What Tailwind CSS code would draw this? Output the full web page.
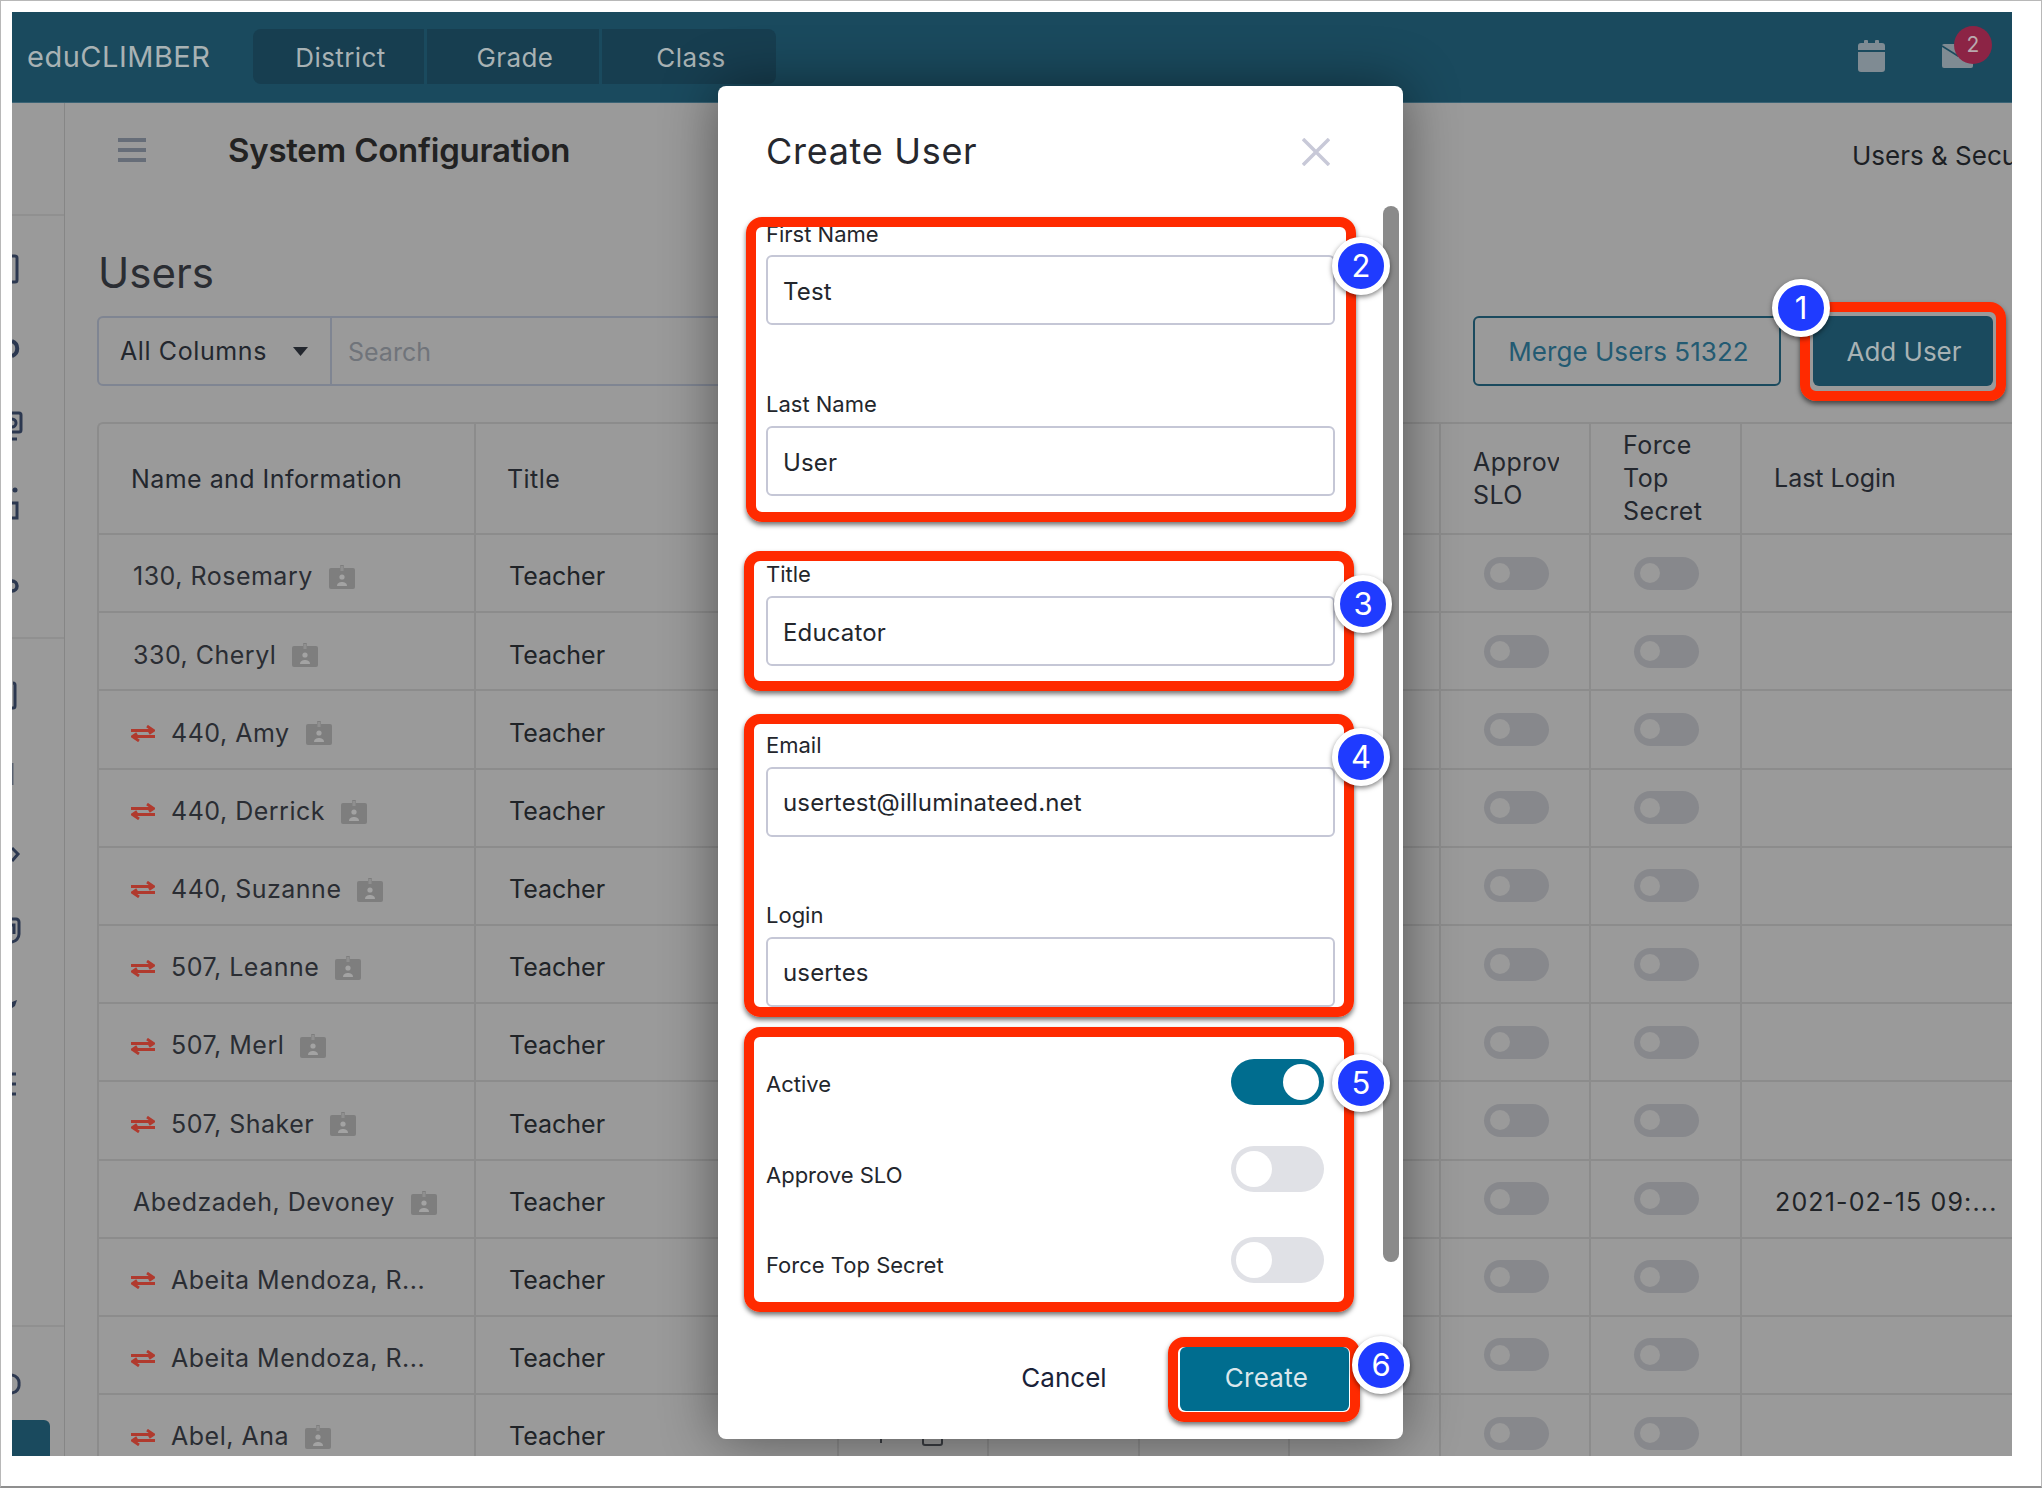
<!DOCTYPE html>
<html lang="en">
<head>
  <meta charset="UTF-8" />
  <title>Create User</title>
  <script src="https://cdn.jsdelivr.net/npm/@tailwindcss/browser@4"></script>
</head>
<body class="bg-white font-['Inter',sans-serif]">
<div class="relative w-[2042px] h-[1488px] border border-[#b8b8b8] border-b-2 border-b-[#8f8f8f] overflow-hidden bg-white pl-[11px] pt-[11px]">

  <!-- app, dimmed by the modal backdrop -->
  <div class="relative w-[2000px] h-[1444px] overflow-hidden bg-[#9a9a9a]">
    <!-- top nav -->
    <div class="h-[91px] bg-[#1a4a5e] flex items-center border-b border-[#3a6375] text-[#a8b2b4]">
      <span class="ml-[15px] w-[226px] text-[29px] tracking-[0.5px]">eduCLIMBER</span>
      <div class="flex gap-[3px] -mt-[2px] text-[26px] tracking-[0.4px]">
        <div class="w-[171px] h-[55px] bg-[#173e50] rounded-l-lg flex items-center justify-center pl-[4px] pt-[2px]">District</div>
        <div class="w-[172px] h-[55px] bg-[#173e50] flex items-center justify-center pl-[4px] pt-[2px]">Grade</div>
        <div class="w-[174px] h-[55px] bg-[#173e50] rounded-r-lg flex items-center justify-center pl-[4px] pt-[2px]">Class</div>
      </div>
      <svg class="ml-[1082px] -mt-[2px] w-[27px] h-[32px]" viewBox="0 0 27 32" fill="#7f8b93"><path d="M3 3h21a3 3 0 0 1 3 3v4H0V6a3 3 0 0 1 3-3z"/><path d="M0 12h27v17a3 3 0 0 1-3 3H3a3 3 0 0 1-3-3z"/><rect x="6" y="0" width="4" height="6" rx="1"/><rect x="17" y="0" width="4" height="6" rx="1"/></svg>
      <div class="relative ml-[57px] w-[31px] h-[24px] -mt-[2px]">
        <svg class="w-[31px] h-[24px]" viewBox="0 0 31 24" fill="#7f8b93"><rect width="31" height="24" rx="2"/><path d="M0 2l16 10 15-9" fill="none" stroke="#1a4a5e" stroke-width="1.5"/></svg>
        <span class="absolute -top-[18px] left-[12px] w-[38px] h-[38px] rounded-full bg-[#8c2445] flex items-center justify-center text-[21px] text-[#b9a9ae]">2</span>
      </div>
    </div>

    <div class="flex h-[1353px]">
      <!-- sidebar, scrolled off to the left -->
      <div class="relative w-[53px] shrink-0 border-r border-[#868686]">
        <svg class="w-[52px] h-[1353px]" viewBox="0 0 52 1353" fill="none" stroke="#2c3850" stroke-width="3">
          <line x1="0" y1="112" x2="52" y2="112" stroke="#868686" stroke-width="1"/>
          <line x1="0" y1="535" x2="52" y2="535" stroke="#868686" stroke-width="1"/>
          <line x1="0" y1="1223" x2="52" y2="1223" stroke="#868686" stroke-width="1"/>
          <path d="M0 153h3a2 2 0 0 1 2 2v22a2 2 0 0 1-2 2H0"/>
          <path d="M0 238a8 8 0 0 1 0 15" stroke-width="4"/>
          <path d="M0 310h7a2 2 0 0 1 2 2v15a2 2 0 0 1-2 2H0M0 316a4 4 0 0 1 0 8M0 336h5"/>
          <circle cx="3" cy="387" r="2.5" fill="#2c3850" stroke="none"/>
          <path d="M0 400h5v15H0"/>
          <path d="M0 478a5 5 0 0 1 0 10" stroke-width="3.5"/>
          <path d="M1 580a2 2 0 0 1 2 2v21a2 2 0 0 1-2 2H0"/>
          <path d="M0 660v22" stroke="#5a6270"/>
          <path d="M0 745l6 6-6 7"/>
          <path d="M0 816h4a3 3 0 0 1 3 3v12a8 8 0 0 1-7 8M0 822h2v9"/>
          <path d="M0 899l5-2-2 6-3 2z" fill="#2c3850" stroke="none"/>
          <path d="M0 971h4M0 981h4M0 991h4"/>
          <path d="M0 1272a8 8 0 0 1 7 9 8 8 0 0 1-7 9"/>
        </svg>
        <div class="absolute left-0 bottom-0 w-[38px] h-[36px] bg-[#1a4a5e] rounded-tr-md"></div>
      </div>

      <!-- main -->
      <div class="pl-[32px] flex-1 min-w-0">
        <div class="h-[94px] flex items-center -ml-[32px]">
          <div class="ml-[53px] w-[28px] shrink-0 flex flex-col gap-[6px]">
            <span class="h-[4px] bg-[#666d78]"></span><span class="h-[4px] bg-[#666d78]"></span><span class="h-[4px] bg-[#666d78]"></span>
          </div>
          <span class="ml-[82px] w-[1624px] shrink-0 pt-[2px] text-[33px] font-semibold text-[#222] tracking-[-0.25px]">System Configuration</span>
          <span class="shrink-0 mt-[10px] text-[26px] text-[#1c1f24] whitespace-nowrap">Users &amp; Security</span>
        </div>
        <h2 class="mt-[50px] mb-[17px] ml-[1px] text-[42px] leading-[52px] text-[#2a2d33]">Users</h2>
        <div class="flex h-[70px]">
          <div class="w-[1376px] shrink-0">
            <div class="w-[1000px] h-[70px] flex border-2 border-[#7f8592] rounded-md text-[25px]">
              <div class="w-[233px] flex items-center pl-[21px] border-r-2 border-[#7f8592] text-[#23272e] tracking-[0.6px]">
                <span class="pt-[2px]">All Columns</span>
                <svg class="ml-[26px] w-[15px] h-[9px]" viewBox="0 0 15 9" fill="#23272e"><path d="M0 0h15L7.5 9z"/></svg>
              </div>
              <div class="flex items-center pl-[16px] pt-[4px] text-[#70747a]">Search</div>
            </div>
          </div>
          <button class="w-[308px] shrink-0 border-2 border-[#1a4a5e] rounded-md text-[26px] text-[#235a72] tracking-[0.05px] pl-[3px]">Merge Users 51322</button>
          <button class="ml-[32px] w-[180px] shrink-0 bg-[#1a4a5e] rounded-md text-[26px] text-[#a8b2b4] pl-[2px]">Add User</button>
        </div>

        <!-- table -->
        <div class="mt-[36px] w-[2000px] border-t-2 border-l-2 border-[#8c8c8c] rounded-tl-md">
          <div class="flex h-[111px] border-b-2 border-[#8c8c8c] text-[25px] text-[#23272e] tracking-[0.45px]">
            <div class="w-[377px] shrink-0 pl-[32px] pt-[2px] flex items-center border-r-2 border-[#8c8c8c]">Name and Information</div>
            <div class="w-[363px] shrink-0 pl-[31px] pt-[2px] flex items-center border-r-2 border-[#8c8c8c]">Title</div>
            <div class="w-[150px] shrink-0 border-r-2 border-[#8c8c8c]"></div>
            <div class="w-[151px] shrink-0 border-r-2 border-[#8c8c8c]"></div>
            <div class="w-[150px] shrink-0 border-r-2 border-[#8c8c8c]"></div>
            <div class="w-[151px] shrink-0 pl-[32px] flex items-center border-r-2 border-[#8c8c8c]">Status</div>
            <div class="w-[150px] shrink-0 pl-[32px] flex items-center border-r-2 border-[#8c8c8c] leading-[33px]"><div class="w-[86px] overflow-hidden">Approve<br>SLO</div></div>
            <div class="w-[151px] shrink-0 pl-[32px] flex items-center border-r-2 border-[#8c8c8c] leading-[33px]"><div>Force<br>Top<br>Secret</div></div>
            <div class="w-[300px] shrink-0 pl-[32px] pt-[1px] flex items-center tracking-[0px]">Last Login</div>
          </div>
          <div id="rows"></div>
        </div>
      </div>
    </div>

    <!-- modal -->
    <div class="absolute left-[706px] top-[74px] w-[685px] h-[1353px] bg-white rounded-lg shadow-[0_0_55px_rgba(0,0,0,0.45)] flex flex-col">
      <div class="h-[120px] pl-[48px] flex items-center relative shrink-0">
        <span class="text-[36px] text-[#26282e] tracking-[0.7px] mt-[10px]">Create User</span>
        <svg class="absolute left-[584px] top-[52px] w-[28px] h-[28px]" viewBox="0 0 28 28" stroke="#c8c9d8" stroke-width="3.5"><path d="M1 1l26 26M27 1L1 27"/></svg>
      </div>
      <div class="relative flex-1 pl-[48px] pr-[68px] text-[#23262c]">
        <div class="absolute left-[665px] top-0 w-[16px] h-[1056px] bg-[#8a8a8a] rounded-full"></div>
        <div class="h-[49px] flex items-end pb-[4px] text-[22px]">First Name</div>
        <div class="h-[70px] border-2 border-[#c5c7d6] rounded-md flex items-center pl-[15px] pt-[3px] text-[24px] tracking-[0.15px]">Test</div>
        <div class="h-[101px] flex items-end pb-[5px] text-[22px]">Last Name</div>
        <div class="h-[70px] border-2 border-[#c5c7d6] rounded-md flex items-center pl-[15px] pt-[3px] text-[24px] tracking-[0.15px]">User</div>
        <div class="h-[100px] flex items-end pb-[5px] text-[22px]">Title</div>
        <div class="h-[70px] border-2 border-[#c5c7d6] rounded-md flex items-center pl-[15px] pt-[3px] text-[24px] tracking-[0.15px]">Educator</div>
        <div class="h-[101px] flex items-end pb-[5px] text-[22px]">Email</div>
        <div class="h-[70px] border-2 border-[#c5c7d6] rounded-md flex items-center pl-[15px] pt-[1px] text-[24px] tracking-[0.15px]">usertest@illuminateed.net</div>
        <div class="h-[100px] flex items-end pb-[5px] text-[22px]">Login</div>
        <div class="h-[70px] border-2 border-[#c5c7d6] rounded-md flex items-center pl-[15px] pt-[1px] text-[24px] tracking-[0.15px]">usertes</div>

        <div class="mt-[52px] h-[46px] pr-[11px] flex items-center justify-between text-[22px]">
          <span class="mt-[5px]">Active</span>
          <span class="w-[93px] h-[46px] rounded-full bg-[#006d8f] flex items-center justify-end pr-[5px]"><span class="w-[36px] h-[36px] rounded-full bg-white"></span></span>
        </div>
        <div class="mt-[41px] h-[46px] pr-[11px] flex items-center justify-between text-[22px]">
          <span class="mt-[12px]">Approve SLO</span>
          <span class="w-[93px] h-[46px] rounded-full bg-[#e0e1e6] flex items-center pl-[5px]"><span class="w-[36px] h-[36px] rounded-full bg-white"></span></span>
        </div>
        <div class="mt-[45px] h-[46px] pr-[11px] flex items-center justify-between text-[22px]">
          <span class="mt-[10px]">Force Top Secret</span>
          <span class="w-[93px] h-[46px] rounded-full bg-[#e0e1e6] flex items-center pl-[5px]"><span class="w-[36px] h-[36px] rounded-full bg-white"></span></span>
        </div>
      </div>
      <div class="h-[92px] shrink-0 flex items-start">
        <span class="ml-[266px] mr-[36px] w-[160px] h-[60px] flex items-center justify-center text-[26px] text-[#1a2238]">Cancel</span>
        <button class="w-[169px] h-[64px] bg-[#006d8f] rounded-md text-[26px] text-[#dbe7ec] tracking-[0.3px] pl-[4px] pb-[4px]">Create</button>
      </div>
    </div>
  </div>

  <!-- screenshot annotations -->
  <div class="absolute left-[1799px] top-[301px] w-[206px] h-[99px] border-[10px] border-[#ff2a00] rounded-[16px] shadow-[0_3px_5px_rgba(0,0,0,0.55)]"></div>
  <div class="absolute left-[745px] top-[216px] w-[610px] h-[305px] border-[10px] border-[#ff2a00] rounded-[16px] shadow-[0_3px_5px_rgba(0,0,0,0.55)]"></div>
  <div class="absolute left-[743px] top-[550px] w-[610px] h-[140px] border-[10px] border-[#ff2a00] rounded-[16px] shadow-[0_3px_5px_rgba(0,0,0,0.55)]"></div>
  <div class="absolute left-[743px] top-[713px] w-[610px] h-[303px] border-[10px] border-[#ff2a00] rounded-[16px] shadow-[0_3px_5px_rgba(0,0,0,0.55)]"></div>
  <div class="absolute left-[743px] top-[1026px] w-[610px] h-[285px] border-[10px] border-[#ff2a00] rounded-[16px] shadow-[0_3px_5px_rgba(0,0,0,0.55)]"></div>
  <div class="absolute left-[1167px] top-[1336px] w-[192px] h-[85px] border-[10px] border-[#ff2a00] rounded-[16px] shadow-[0_3px_5px_rgba(0,0,0,0.55)]"></div>

  <div class="absolute left-[1771px] top-[278px] w-[58px] h-[58px] rounded-full bg-[#1f3bff] border-[6px] border-white shadow-[0_2px_5px_rgba(0,0,0,0.5)] flex items-center justify-center text-white text-[31px]">1</div>
  <div class="absolute left-[1331px] top-[236px] w-[58px] h-[58px] rounded-full bg-[#1f3bff] border-[6px] border-white shadow-[0_2px_5px_rgba(0,0,0,0.5)] flex items-center justify-center text-white text-[31px]">2</div>
  <div class="absolute left-[1333px] top-[574px] w-[58px] h-[58px] rounded-full bg-[#1f3bff] border-[6px] border-white shadow-[0_2px_5px_rgba(0,0,0,0.5)] flex items-center justify-center text-white text-[31px]">3</div>
  <div class="absolute left-[1331px] top-[727px] w-[58px] h-[58px] rounded-full bg-[#1f3bff] border-[6px] border-white shadow-[0_2px_5px_rgba(0,0,0,0.5)] flex items-center justify-center text-white text-[31px]">4</div>
  <div class="absolute left-[1331px] top-[1053px] w-[58px] h-[58px] rounded-full bg-[#1f3bff] border-[6px] border-white shadow-[0_2px_5px_rgba(0,0,0,0.5)] flex items-center justify-center text-white text-[31px]">5</div>
  <div class="absolute left-[1351px] top-[1335px] w-[58px] h-[58px] rounded-full bg-[#1f3bff] border-[6px] border-white shadow-[0_2px_5px_rgba(0,0,0,0.5)] flex items-center justify-center text-white text-[31px]">6</div>
</div>

<script>
  // [name, has merge arrows, last login]
  const users = [
    ["130, Rosemary", false, ""],
    ["330, Cheryl", false, ""],
    ["440, Amy", true, ""],
    ["440, Derrick", true, ""],
    ["440, Suzanne", true, ""],
    ["507, Leanne", true, ""],
    ["507, Merl", true, ""],
    ["507, Shaker", true, ""],
    ["Abedzadeh, Devoney", false, "2021-02-15 09:..."],
    ["Abeita Mendoza, R...", true, ""],
    ["Abeita Mendoza, R...", true, ""],
    ["Abel, Ana", true, ""],
  ];

  const arrows = `<svg class="w-[24px] h-[17px] shrink-0 mr-[16px]" viewBox="0 0 24 17" fill="none" stroke="#b03a2e" stroke-width="2.8"><path d="M0 5.5h22M16 1l6.5 4.5L18 8.5M24 11.5H2M8 16l-6.5-4.5L6 8.5"/></svg>`;
  const badge = `<svg class="ml-[16px] w-[26px] h-[24px] shrink-0" viewBox="0 0 26 24"><path d="M2 3h9V1a1 1 0 0 1 1-1h2a1 1 0 0 1 1 1v2h9a2 2 0 0 1 2 2v17a2 2 0 0 1-2 2H2a2 2 0 0 1-2-2V5a2 2 0 0 1 2-2z" fill="#7e7e7e"/><rect x="11.5" y="1" width="3" height="5" fill="#8f8f8f"/><circle cx="13" cy="12" r="2.6" fill="#a3a3a3"/><path d="M8 21c0-3 2.5-4 5-4s5 1 5 4z" fill="#a3a3a3"/></svg>`;
  const toggle = `<span class="ml-[2px] w-[65px] h-[33px] rounded-full bg-[#87888c] flex items-center pl-[6px]"><span class="w-[20px] h-[20px] rounded-full bg-[#9a9a9a]"></span></span>`;
  // action icons of the column under the modal; only their bottoms show below it
  const actions = `<svg class="w-[148px] h-[78px]" viewBox="0 0 148 78" fill="none" stroke="#3a3d42" stroke-width="2"><path d="M42 30v18"/><rect x="84" y="30" width="19" height="20" rx="2"/></svg>`;

  document.getElementById("rows").innerHTML = users.map(([name, merged, login], i) => `
    <div class="flex h-[78.2px] border-b-2 border-[#8c8c8c] text-[25px] text-[#2a2d33]">
      <div class="w-[377px] shrink-0 ${merged ? "pl-[32px]" : "pl-[34px]"} pt-[8px] flex items-center border-r-2 border-[#8c8c8c] tracking-[0.5px]">${merged ? arrows : ""}<span class="whitespace-nowrap">${name}</span>${name.endsWith("...") ? "" : badge}</div>
      <div class="w-[363px] shrink-0 pl-[33px] pt-[8px] flex items-center border-r-2 border-[#8c8c8c] text-[#202327]">Teacher</div>
      <div class="w-[150px] shrink-0 border-r-2 border-[#8c8c8c]">${i === 11 ? actions : ""}</div>
      <div class="w-[151px] shrink-0 border-r-2 border-[#8c8c8c]"></div>
      <div class="w-[150px] shrink-0 border-r-2 border-[#8c8c8c]"></div>
      <div class="w-[151px] shrink-0 border-r-2 border-[#8c8c8c]"></div>
      <div class="w-[150px] shrink-0 flex items-center justify-center border-r-2 border-[#8c8c8c]">${toggle}</div>
      <div class="w-[151px] shrink-0 flex items-center justify-center border-r-2 border-[#8c8c8c]">${toggle}</div>
      <div class="w-[300px] shrink-0 pl-[33px] pt-[8px] flex items-center text-[#202327] tracking-[1.15px]">${login}</div>
    </div>`).join("");
</script>
</body>
</html>
